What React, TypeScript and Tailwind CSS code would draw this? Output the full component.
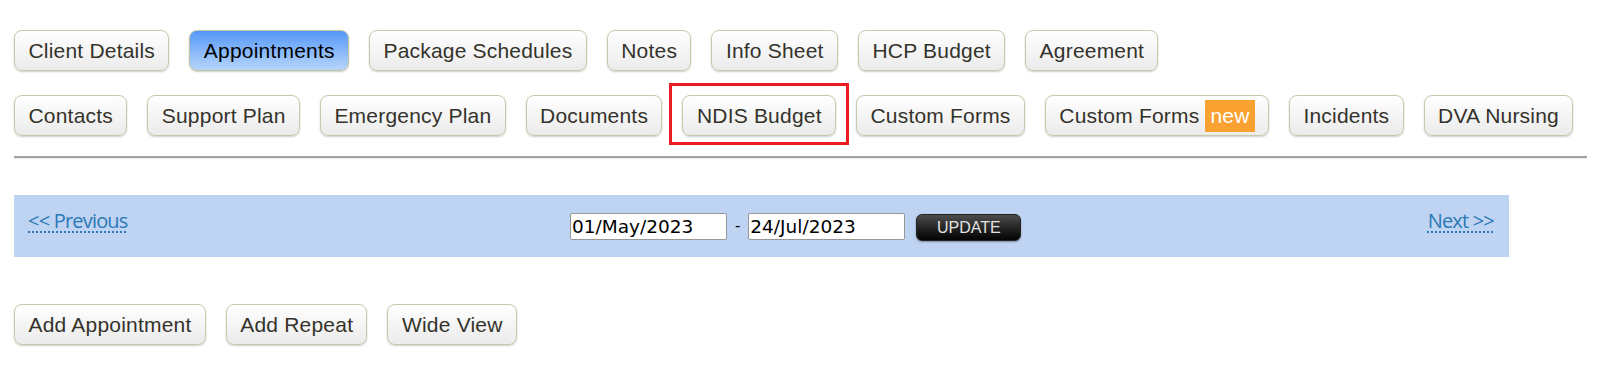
import type { ReactNode } from 'react';

const TabButton = ({ children, active = false }: { children: ReactNode; active?: boolean }) => (
  <button
    className={
      'flex h-[41px] items-center whitespace-nowrap rounded-[8px] border-[1.5px] pl-[13.5px] pr-[13.3px] text-[21px] leading-none tracking-[0.2px] shadow-[0_1px_2px_rgba(0,0,0,0.2)] ' +
      (active
        ? 'border-[#bfc3a2] bg-linear-to-b from-[#5597f7] to-[#b6d5fa] text-black'
        : 'border-[#c9c9aa] bg-linear-to-b from-white to-[#ebebeb] text-[#34332b]')
    }
  >
    {children}
  </button>
);

const NavLink = ({ children }: { children: ReactNode }) => (
  <a
    href="#"
    className="font-['Open_Sans',sans-serif] text-[20px] leading-[26px] tracking-[-0.8px] text-[#2b79b6] underline decoration-dotted decoration-[1.5px] underline-offset-[3px]"
  >
    {children}
  </a>
);

const DateBox = ({ value }: { value: string }) => (
  <input
    type="text"
    defaultValue={value}
    className="h-[27px] w-[157px] rounded-[2px] border border-[#979797] bg-white px-[1px] font-['DejaVu_Sans',sans-serif] text-[18.5px] leading-none text-black outline-none"
  />
);

export default function App() {
  return (
    <div className="min-h-[378px] bg-white pl-[14px] pr-[13px] pt-[30px] font-['Liberation_Sans',Arial,sans-serif]">
      <div className="flex gap-5">
        <TabButton>Client Details</TabButton>
        <TabButton active>Appointments</TabButton>
        <TabButton>Package Schedules</TabButton>
        <TabButton>Notes</TabButton>
        <TabButton>Info Sheet</TabButton>
        <TabButton>HCP Budget</TabButton>
        <TabButton>Agreement</TabButton>
      </div>

      <div className="mt-6 flex gap-5">
        <TabButton>Contacts</TabButton>
        <TabButton>Support Plan</TabButton>
        <TabButton>Emergency Plan</TabButton>
        <TabButton>Documents</TabButton>
        <div className="relative">
          <TabButton>NDIS Budget</TabButton>
          <div className="pointer-events-none absolute -bottom-[9px] -left-[13px] -right-[13px] -top-[12px] border-[3px] border-[#ec1c24]" />
        </div>
        <TabButton>Custom Forms</TabButton>
        <TabButton>
          Custom Forms&nbsp;
          <span className="flex h-[32px] items-center bg-[#f9a232] px-[5px] text-white">new</span>
        </TabButton>
        <TabButton>Incidents</TabButton>
        <TabButton>DVA Nursing</TabButton>
      </div>

      <div className="mt-5 h-[2px] bg-[#a3a3a3] shadow-[0_1px_1px_rgba(0,0,0,0.08)]" />

      <div className="mt-[37px] flex h-[62px] w-[1495px] items-start bg-[#bfd3f2] pl-[14px] pr-[15px]">
        <div className="mt-[13px] w-[542px]">
          <NavLink>&lt;&lt; Previous</NavLink>
        </div>
        <div className="flex items-center self-center">
          <DateBox value="01/May/2023" />
          <span className="mx-[8px] text-[16px] text-black">-</span>
          <DateBox value="24/Jul/2023" />
          <button className="ml-[11px] mt-[3px] h-[27px] w-[105px] rounded-[6px] border border-[#222] bg-linear-to-b from-[#4d4d4d] to-[#050505] text-[16px] leading-none text-[#e2e2e2] shadow-[0_1px_2px_rgba(0,0,0,0.35)]">
            UPDATE
          </button>
        </div>
        <div className="mt-[13px] flex-1 text-right">
          <NavLink>Next &gt;&gt;</NavLink>
        </div>
      </div>

      <div className="mt-[47px] flex gap-5">
        <TabButton>Add Appointment</TabButton>
        <TabButton>Add Repeat</TabButton>
        <TabButton>Wide View</TabButton>
      </div>
    </div>
  );
}
